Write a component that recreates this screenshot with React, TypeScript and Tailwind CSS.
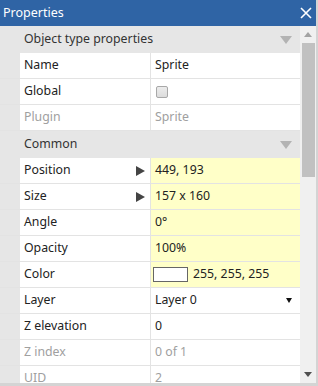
import React from "react";

type Row = {
  label: string;
  value?: React.ReactNode;
  muted?: boolean;
  hilite?: boolean;
  arrow?: boolean;
};

const font = { fontFamily: '"Segoe UI", "Noto Sans", "Open Sans", sans-serif' };

function Header({ title }: { title: string }) {
  return (
    <div className="flex h-[27px] items-center justify-between bg-[#e6e6e6] pl-[24px] pr-[8px] text-[12.3px] text-[#333]">
      <span>{title}</span>
      <svg width="12" height="8" viewBox="0 0 12 8">
        <path d="M0 0 L12 0 L6 8 Z" fill="#b3b3b3" />
      </svg>
    </div>
  );
}

function PropRow({ label, value, muted, hilite, arrow }: Row) {
  return (
    <div className="flex h-[26px] border-b border-[#e3e3e3] pl-[20px]">
      <div
        className={`flex w-[131px] items-center justify-between border-r border-[#e3e3e3] bg-white pl-[4px] pr-[5px] text-[12.3px] ${
          muted ? "text-[#a0a0a0]" : "text-[#222]"
        }`}
      >
        <span>{label}</span>
        {arrow && (
          <svg width="9" height="10" viewBox="0 0 9 10">
            <path d="M0 0 L9 5 L0 10 Z" fill="#444" />
          </svg>
        )}
      </div>
      <div
        className={`flex flex-1 items-center pl-[4px] text-[12.3px] ${
          hilite ? "bg-[#ffffc8]" : "bg-white"
        } ${muted ? "text-[#a0a0a0]" : "text-[#222]"}`}
      >
        {value}
      </div>
    </div>
  );
}

export default function App() {
  return (
    <div className="relative h-[386px] w-[318px] overflow-hidden bg-[#d4d4d4]" style={font}>
      <div className="flex h-[383px] w-[316px] flex-col">
        {/* Title bar */}
        <div className="flex h-[26px] shrink-0 items-center justify-between bg-[#2f64a5] pl-[3px] pr-[4px] text-white">
          <span className="text-[12.5px]">Properties</span>
          <svg width="12" height="12" viewBox="0 0 12 12">
            <path d="M1 1 L11 11 M11 1 L1 11" stroke="white" strokeWidth="1.6" />
          </svg>
        </div>

        <div className="flex min-h-0 flex-1">
          {/* Grid */}
          <div className="w-[300px] overflow-hidden bg-[#e6e6e6]">
            <Header title="Object type properties" />
            <PropRow label="Name" value="Sprite" />
            <PropRow
              label="Global"
              value={
                <span className="ml-[1px] block h-[12px] w-[12px] rounded-[2px] border border-[#a8a8a8] bg-gradient-to-b from-[#ececec] to-[#dcdcdc]" />
              }
            />
            <PropRow label="Plugin" value="Sprite" muted />
            <Header title="Common" />
            <PropRow label="Position" value="449, 193" hilite arrow />
            <PropRow label="Size" value="157 x 160" hilite arrow />
            <PropRow label="Angle" value="0°" hilite />
            <PropRow label="Opacity" value="100%" hilite />
            <PropRow
              label="Color"
              hilite
              value={
                <div className="flex items-center gap-[5px]">
                  <span className="-ml-[2px] block h-[15px] w-[35px] border border-[#666] bg-white" />
                  <span>255, 255, 255</span>
                </div>
              }
            />
            <PropRow
              label="Layer"
              value={
                <div className="flex w-full items-center justify-between pr-[8px]">
                  <span>Layer 0</span>
                  <svg width="6" height="5" viewBox="0 0 6 5">
                    <path d="M0 0 L6 0 L3 5 Z" fill="#111" />
                  </svg>
                </div>
              }
            />
            <PropRow label="Z elevation" value="0" />
            <PropRow label="Z index" value="0 of 1" muted />
            <PropRow label="UID" value="2" muted />
          </div>

          {/* Scrollbar */}
          <div className="flex w-[16px] flex-col items-center bg-[#f0f0f0]">
            <div className="flex h-[17px] w-full items-center justify-center">
              <svg width="8" height="5" viewBox="0 0 8 5">
                <path d="M0 5 L8 5 L4 0 Z" fill="#a3a3a3" />
              </svg>
            </div>
            <div className="h-[134px] w-[13px] bg-[#c1c1c1]" />
            <div className="flex-1" />
            <div className="flex h-[17px] w-full items-center justify-center">
              <svg width="8" height="5" viewBox="0 0 8 5">
                <path d="M0 0 L8 0 L4 5 Z" fill="#505050" />
              </svg>
            </div>
          </div>
        </div>
      </div>
    </div>
  );
}
